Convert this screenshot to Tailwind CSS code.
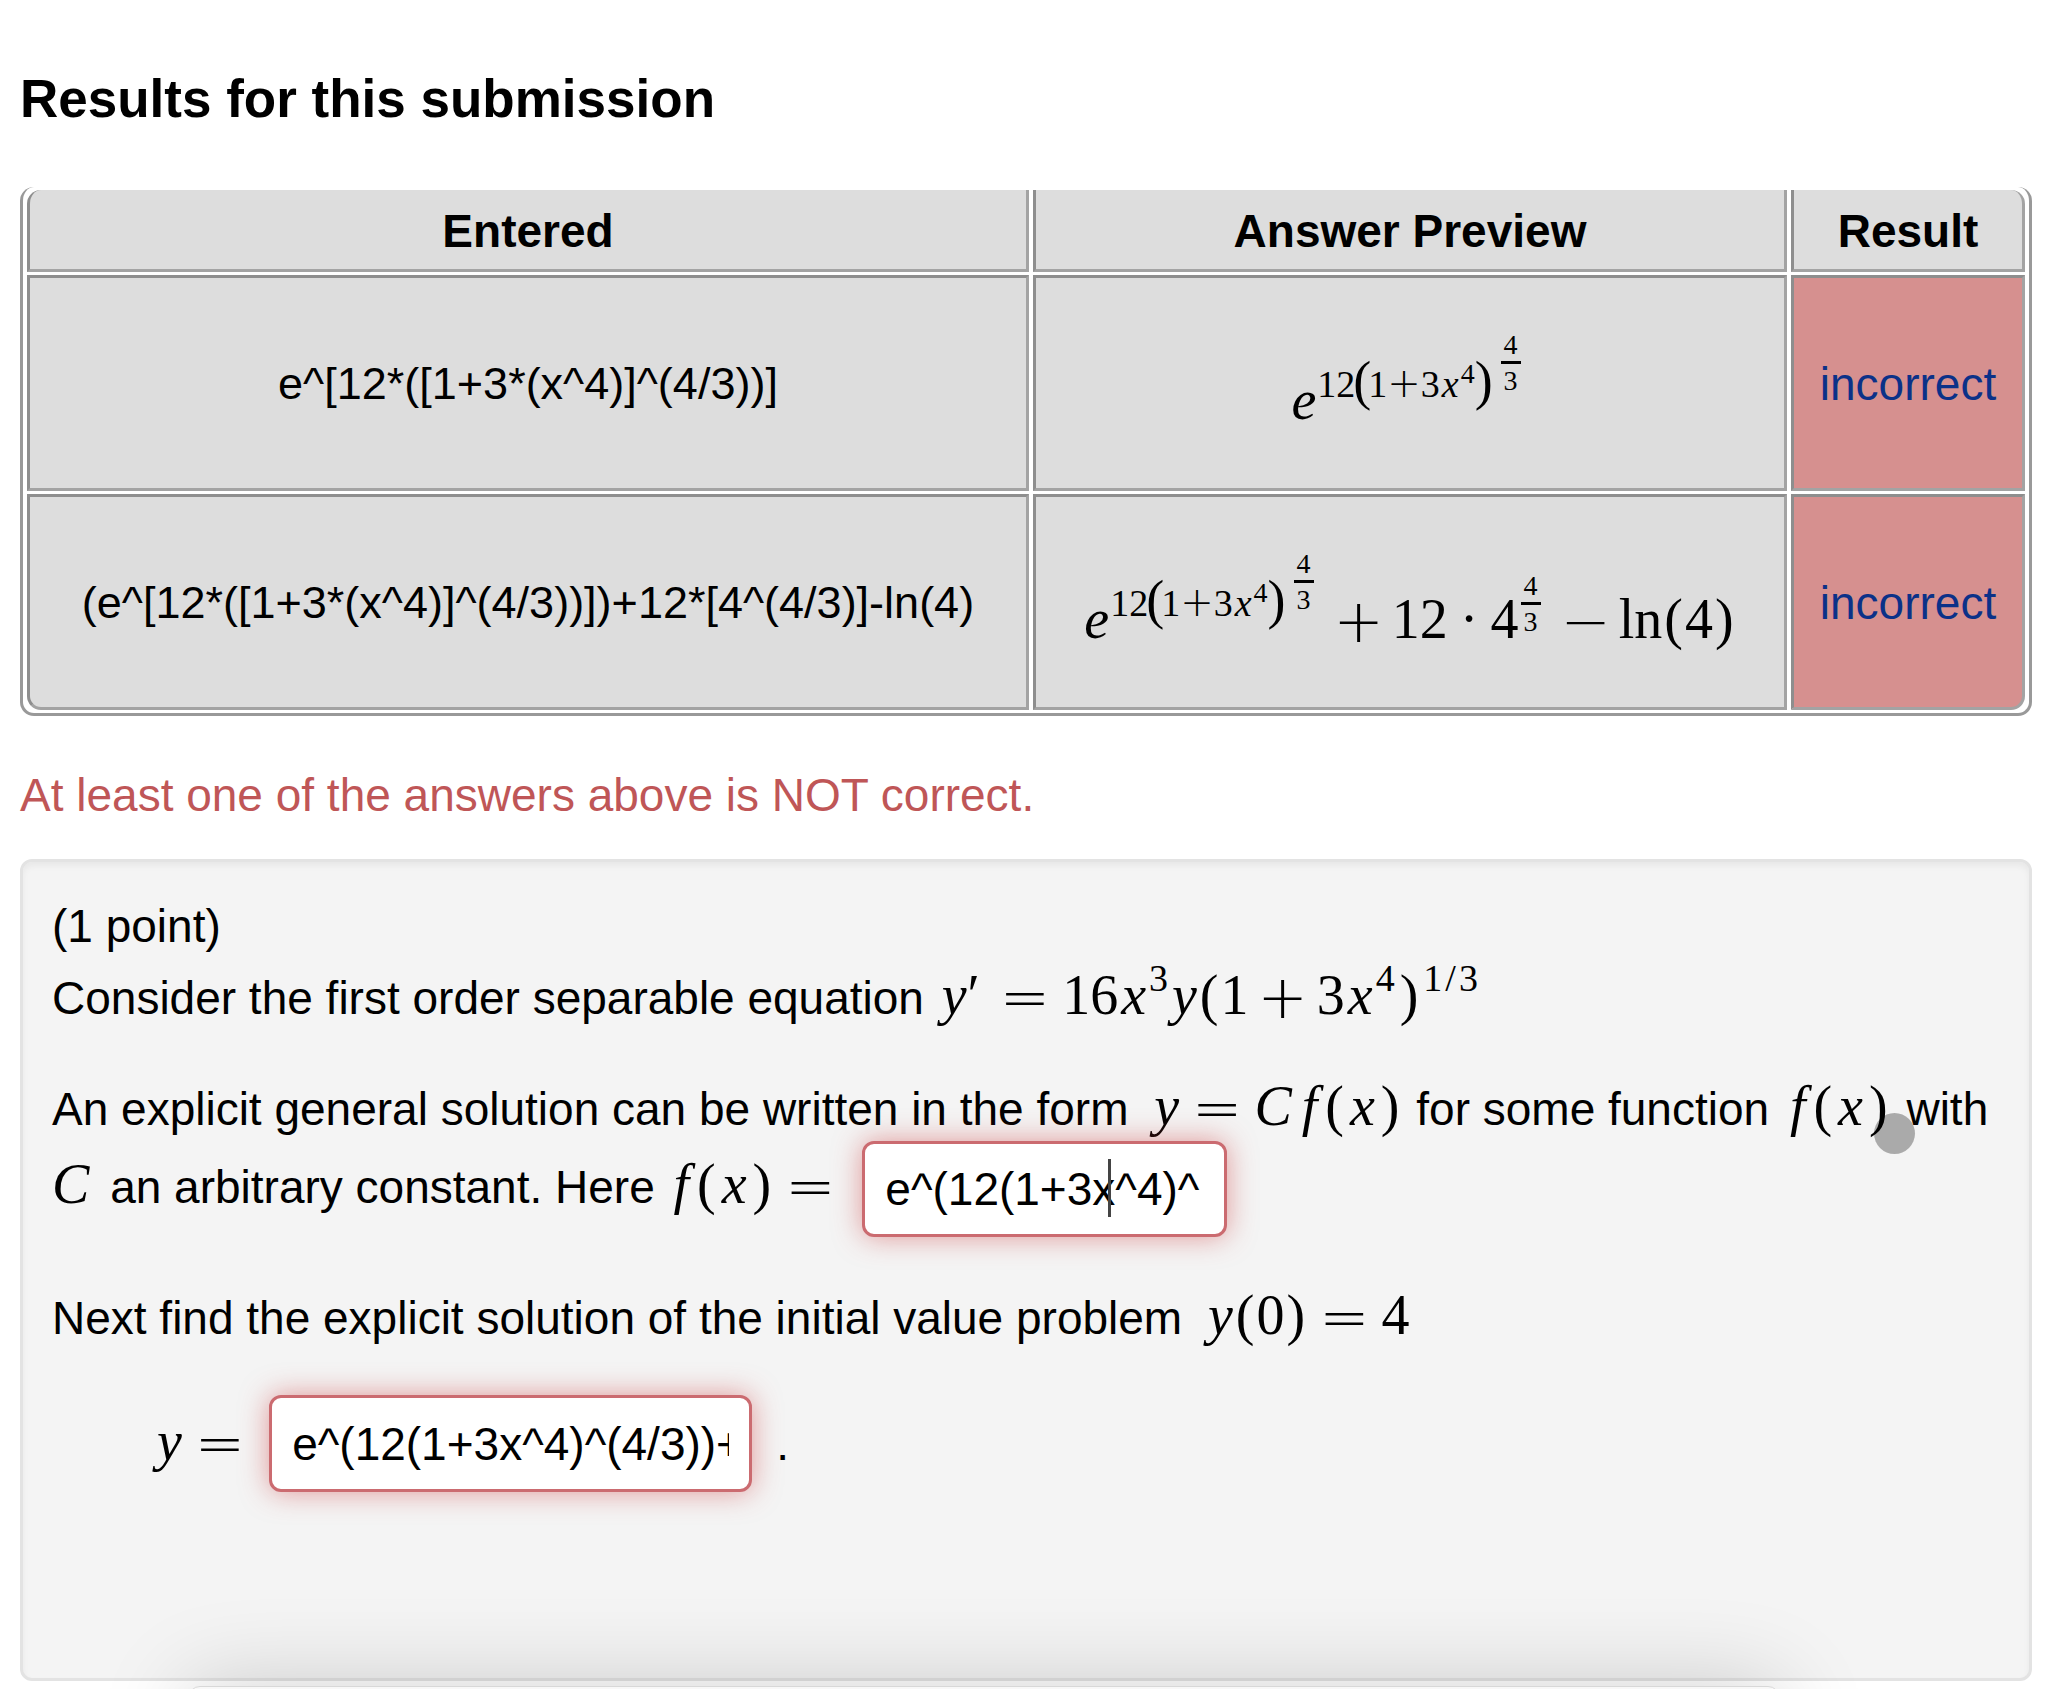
<!DOCTYPE html>
<html lang="en">
<head>
    <meta charset="UTF-8">
    <meta name="viewport" content="width=device-width, initial-scale=1.0">
    <title>Results for this submission</title>
    <script src="https://cdn.jsdelivr.net/npm/@tailwindcss/browser@4"></script>
</head>
<body class="relative overflow-x-hidden bg-white pt-[67px] pr-4 pb-1 pl-5 font-['Liberation_Sans',Arial,sans-serif] text-[46px] text-black">

    <h1 class="text-[53px] leading-[64px] font-bold">Results for this submission</h1>

    <!-- Attempt results -->
    <table class="mt-[56px] w-full table-fixed border-separate border-spacing-x-[4px] border-spacing-y-[3px] rounded-[14px] border-x-[3px] border-b-[3px] border-[#999999] text-center">
        <colgroup>
            <col>
            <col class="w-[754px]">
            <col class="w-[234px]">
        </colgroup>
        <thead>
            <tr class="h-[82px]">
                <th class="rounded-tl-[14px] border-x-[3px] border-b-[3px] border-[#a3a3a3] border-l-[#8e8e8e] bg-[#dddddd] pt-1 font-bold">Entered</th>
                <th class="border-x-[3px] border-b-[3px] border-[#a3a3a3] border-l-[#8e8e8e] bg-[#dddddd] pt-1 font-bold">Answer Preview</th>
                <th class="rounded-tr-[14px] border-x-[3px] border-b-[3px] border-[#a3a3a3] border-l-[#8e8e8e] bg-[#dddddd] pt-1 font-bold">Result</th>
            </tr>
        </thead>
        <tbody>
            <tr class="h-[216px]">
                <td class="border-[3px] border-[#a3a3a3] border-t-[#8e8e8e] border-l-[#8e8e8e] bg-[#dddddd] pt-[2px] text-[45px]">e^[12*([1+3*(x^4)]^(4/3))]</td>
                <td class="border-[3px] border-[#a3a3a3] border-t-[#8e8e8e] border-l-[#8e8e8e] bg-[#dddddd] pb-2">
                    <div class="font-['Liberation_Serif',serif] text-[56px] leading-none whitespace-nowrap">
                        <i>e</i><span class="ml-px align-[22px] text-[38px] leading-[0]">12<span class="-mr-[3px] -ml-[2px] align-[-2px] text-[54px]">(</span>1<span class="font-['DejaVu_Sans'] text-[40px] font-extralight">+</span>3<i class="mx-[2px]">x</i><span class="align-[14px] text-[28px]">4</span><span class="align-[-2px] text-[54px]">)</span><span class="mr-2 ml-2 inline-flex flex-col items-center align-[43px] text-[28px] leading-[28px]"><span class="border-b-[3px] border-black px-[3px] pb-[2px]">4</span><span class="pt-[3px]">3</span></span></span>
                    </div>
                </td>
                <td class="border-[3px] border-[#a3a3a3] border-t-[#8e8e8e] border-l-[#8e8e8e] bg-[#d6908f] pt-[2px]"><a href="#" class="text-[#0b3188]">incorrect</a></td>
            </tr>
            <tr class="h-[216px]">
                <td class="rounded-bl-[14px] border-[3px] border-[#a3a3a3] border-t-[#8e8e8e] border-l-[#8e8e8e] bg-[#dddddd] pt-[2px] text-[45px]">(e^[12*([1+3*(x^4)]^(4/3))])+12*[4^(4/3)]-ln(4)</td>
                <td class="border-[3px] border-[#a3a3a3] border-t-[#8e8e8e] border-l-[#8e8e8e] bg-[#dddddd] pb-2">
                    <div class="font-['Liberation_Serif',serif] text-[56px] leading-none whitespace-nowrap">
                        <i>e</i><span class="ml-px align-[22px] text-[38px] leading-[0]">12<span class="-mr-[3px] -ml-[2px] align-[-2px] text-[54px]">(</span>1<span class="font-['DejaVu_Sans'] text-[40px] font-extralight">+</span>3<i class="mx-[2px]">x</i><span class="align-[14px] text-[28px]">4</span><span class="align-[-2px] text-[54px]">)</span><span class="mr-2 ml-2 inline-flex flex-col items-center align-[43px] text-[28px] leading-[28px]"><span class="border-b-[3px] border-black px-[3px] pb-[2px]">4</span><span class="pt-[3px]">3</span></span></span><span class="mr-2 ml-3 align-[-4px] font-['DejaVu_Sans'] text-[60px] leading-[0] font-extralight">+</span>12<span class="mx-3">·</span>4<span class="mr-2 ml-[2px] inline-flex flex-col items-center align-[43px] text-[28px] leading-[28px]"><span class="border-b-[3px] border-black px-[3px] pb-[2px]">4</span><span class="pt-[3px]">3</span></span><span class="mr-2 ml-3 align-[-4px] font-['DejaVu_Sans'] text-[60px] leading-[0] font-extralight">−</span>ln<span class="mx-[2px]">(</span>4<span class="mx-[2px]">)</span>
                    </div>
                </td>
                <td class="rounded-br-[14px] border-[3px] border-[#a3a3a3] border-t-[#8e8e8e] border-l-[#8e8e8e] bg-[#d6908f] pt-[2px]"><a href="#" class="text-[#0b3188]">incorrect</a></td>
            </tr>
        </tbody>
    </table>

    <p class="mt-[49px] leading-[60px] text-[#bf5657]">At least one of the answers above is NOT correct.</p>

    <!-- Problem body -->
    <form class="mt-[34px] rounded-[12px] border-[3px] border-[#e3e3e3] bg-[#f4f4f4] px-[29px] pt-[28px] pb-[186px] shadow-[inset_0_4px_6px_rgba(0,0,0,0.05)]">
        <p class="leading-[72px]">(1 point)<br>Consider the first order separable equation <span class="ml-1 font-['Liberation_Serif',serif] text-[56px] leading-[0] whitespace-nowrap"><i class="mx-px">y</i>′<span class="mr-3 ml-5 align-[-4px] font-['DejaVu_Sans'] text-[60px] leading-[0] font-extralight">=</span>16<i class="mx-[3px]">x</i><span class="mr-[3px] align-[23px] text-[38px] leading-[0]">3</span><i class="mx-px">y</i><span class="mx-[2px]">(</span>1<span class="mx-[9px] align-[-4px] font-['DejaVu_Sans'] text-[60px] leading-[0] font-extralight">+</span>3<i class="mx-[3px]">x</i><span class="mr-[3px] align-[23px] text-[38px] leading-[0]">4</span><span class="mx-[2px]">)</span><span class="ml-[3px] align-[23px] text-[38px] leading-[0]">1<span class="mx-[3px]">/</span>3</span></span></p>

        <p class="mt-9 leading-[78px]">An explicit general solution can be written in the form <span class="mr-[2px] ml-3 font-['Liberation_Serif',serif] text-[56px] leading-[0] whitespace-nowrap"><i class="mx-px">y</i><span class="mx-3 align-[-4px] font-['DejaVu_Sans'] text-[60px] leading-[0] font-extralight">=</span><i class="mr-1">C</i><i class="mx-[6px]">f</i><span class="mx-[2px]">(</span><i class="mx-1">x</i><span class="mx-[2px]">)</span></span> for some function <span class="mr-1 ml-[2px] font-['Liberation_Serif',serif] text-[56px] leading-[0] whitespace-nowrap"><i class="mx-[6px]">f</i><span class="mx-[2px]">(</span><i class="mx-1">x</i><span class="mx-[2px]">)</span></span> with <span class="font-['Liberation_Serif',serif] text-[56px] leading-[0] whitespace-nowrap"><i class="mr-2">C</i></span> an arbitrary constant. Here <label for="answer-f" class="font-['Liberation_Serif',serif] text-[56px] leading-[0] whitespace-nowrap"><i class="mx-[6px]">f</i><span class="mx-[2px]">(</span><i class="mx-1">x</i><span class="mx-[2px]">)</span><span class="mx-3 align-[-4px] font-['DejaVu_Sans'] text-[60px] leading-[0] font-extralight">=</span></label>
            <span class="relative -mt-[22px] -mb-[18px] ml-[2px] inline-block align-middle leading-none">
                <input id="answer-f" type="text" value="e^(12(1+3x^4)^" class="block h-[96px] w-[365px] rounded-[12px] border-[3px] border-[#cb6b70] bg-white px-5 shadow-[0_0_28px_rgba(205,60,60,0.5)] outline-none">
                <span class="absolute top-[18px] left-[246px] h-[58px] w-[3px] bg-[#444444]"></span>
            </span>
        </p>

        <p class="mt-[53px] leading-[78px]">Next find the explicit solution of the initial value problem <span class="ml-3 font-['Liberation_Serif',serif] text-[56px] leading-[0] whitespace-nowrap"><i class="mx-px">y</i><span class="mx-[2px]">(</span>0<span class="mx-[2px]">)</span><span class="mx-3 align-[-4px] font-['DejaVu_Sans'] text-[60px] leading-[0] font-extralight">=</span>4</span></p>

        <div class="mt-[38px] flex items-baseline pl-[104px]">
            <label for="answer-y" class="font-['Liberation_Serif',serif] text-[56px] leading-none whitespace-nowrap"><i class="mx-px">y</i><span class="mx-3 align-[-4px] font-['DejaVu_Sans'] text-[60px] leading-[0] font-extralight">=</span></label>
            <input id="answer-y" type="text" value="e^(12(1+3x^4)^(4/3))+12(4)^(4/3)-ln(4)" class="ml-3 h-[97px] w-[483px] rounded-[12px] border-[3px] border-[#cb6b70] bg-white px-5 shadow-[0_0_28px_rgba(205,60,60,0.5)] outline-none">
            <span class="ml-6">.</span>
        </div>
    </form>

    <!-- Touch pointer -->
    <div class="absolute top-[1113px] left-[1874px] size-[41px] rounded-full bg-black/30"></div>

    <!-- Top edge of the bottom sheet -->
    <div class="fixed right-[268px] -bottom-[200px] left-[188px] h-[203px] rounded-[12px] border border-[#d8d8d8] bg-[#f8f8f8] shadow-[0_0_90px_rgba(0,0,0,0.18)]"></div>

</body>
</html>
